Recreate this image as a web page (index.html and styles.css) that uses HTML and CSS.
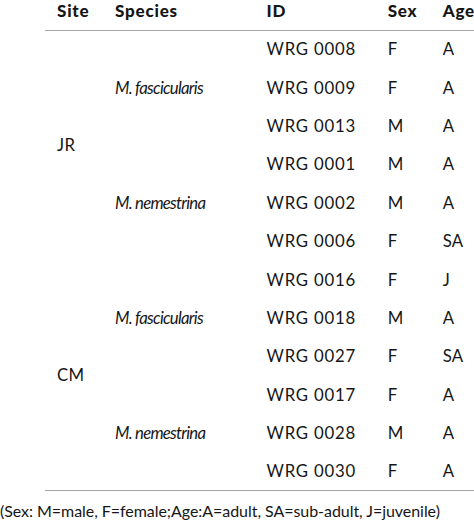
FILE: index.html
```html
<!DOCTYPE html>
<html lang="en">
<head>
<meta charset="utf-8">
<title>Samples</title>
<link rel="stylesheet" href="styles.css">
</head>
<body>
<div class="frame">
  <table class="samples">
    <colgroup>
      <col class="c-site"><col class="c-species"><col class="c-id"><col class="c-sex"><col class="c-age">
    </colgroup>
    <thead>
      <tr><th>Site</th><th>Species</th><th>ID</th><th>Sex</th><th>Age</th></tr>
    </thead>
    <tbody>
      <tr><td rowspan="6">JR</td><td rowspan="3" class="sp">M. fascicularis</td><td class="id">WRG 0008</td><td>F</td><td>A</td></tr>
      <tr><td class="id">WRG 0009</td><td>F</td><td>A</td></tr>
      <tr><td class="id">WRG 0013</td><td>M</td><td>A</td></tr>
      <tr><td rowspan="3" class="sp">M. nemestrina</td><td class="id">WRG 0001</td><td>M</td><td>A</td></tr>
      <tr><td class="id">WRG 0002</td><td>M</td><td>A</td></tr>
      <tr><td class="id">WRG 0006</td><td>F</td><td>SA</td></tr>
      <tr><td rowspan="6">CM</td><td rowspan="3" class="sp">M. fascicularis</td><td class="id">WRG 0016</td><td>F</td><td>J</td></tr>
      <tr><td class="id">WRG 0018</td><td>M</td><td>A</td></tr>
      <tr><td class="id">WRG 0027</td><td>F</td><td>SA</td></tr>
      <tr><td rowspan="3" class="sp">M. nemestrina</td><td class="id">WRG 0017</td><td>F</td><td>A</td></tr>
      <tr><td class="id">WRG 0028</td><td>M</td><td>A</td></tr>
      <tr><td class="id">WRG 0030</td><td>F</td><td>A</td></tr>
    </tbody>
  </table>
  <p class="note">(Sex: M=male, F=female;Age:A=adult, SA=sub-adult, J=juvenile)</p>
</div>
</body>
</html>
```
FILE: styles.css
```css
html, body {
  margin: 0;
  padding: 0;
  background: #ffffff;
}
body {
  width: 474px;
  height: 526px;
  overflow: hidden;
  font-family: Lato, "Open Sans", sans-serif;
  color: #161616;
}
.frame {
  display: flex;
  flex-direction: column;
  width: 474px;
}
.samples {
  margin-left: 45px;
  border-collapse: collapse;
  table-layout: fixed;
  width: 446px;
  font-size: 16.75px;
}
.c-site { width: 58px; }
.c-species { width: 151.5px; }
.c-id { width: 121.2px; }
.c-sex { width: 55px; }
.c-age { width: 60.3px; }
.samples th,
.samples td {
  padding: 0 0 0 12px;
  text-align: left;
  white-space: nowrap;
  line-height: 22px;
}
.samples th {
  font-weight: 900;
  font-size: 17px;
  letter-spacing: 0.8px;
  padding-bottom: 7.5px;
  vertical-align: top;
}
.samples thead tr {
  border-bottom: 1px solid #a5a5a5;
}
.samples tbody tr {
  height: 38.4px;
}
.samples tbody {
  border-bottom: 1px solid #a5a5a5;
}
.samples td {
  vertical-align: middle;
  letter-spacing: 0.3px;
}
.samples td.id {
  letter-spacing: 0.8px;
}
.samples td.sp {
  font-style: italic;
  font-size: 16.75px;
  letter-spacing: -0.75px;
}
.note {
  margin: 9px 0 0 0;
  font-size: 16px;
  line-height: 22px;
  letter-spacing: -0.05px;
  white-space: nowrap;
}
```
